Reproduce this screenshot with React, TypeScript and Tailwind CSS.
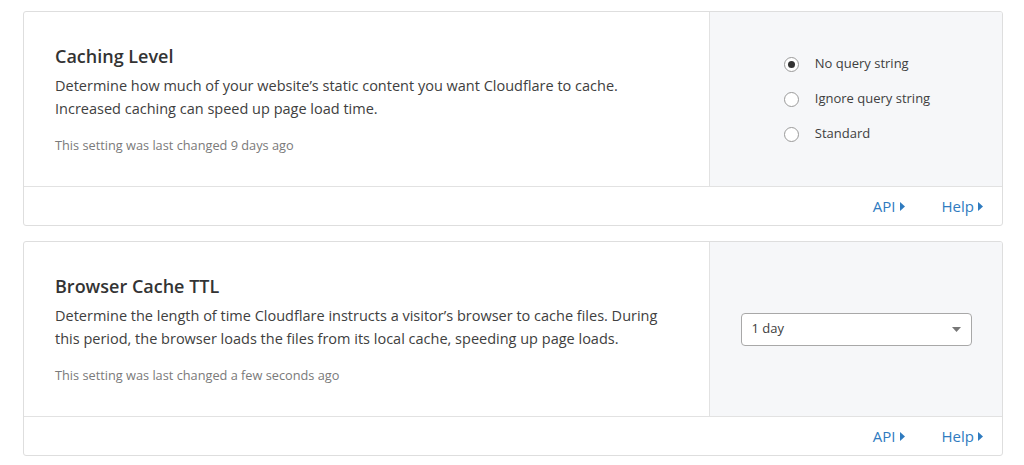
import React from 'react';

const font = { fontFamily: '"Open Sans", "Noto Sans", Arial, sans-serif' };

const Caret = () => (
  <svg width="5" height="9" viewBox="0 0 5 9" className="ml-[4px] inline-block">
    <path d="M0 0 L5 4.5 L0 9 Z" fill="currentColor" />
  </svg>
);

const CardFooter = () => (
  <div className="flex h-[39px] items-center justify-end gap-[37px] border-t border-[#e2e2e2] pr-[19px] text-[15px] text-[#2f7bbf]">
    <a className="flex items-center">
      API
      <Caret />
    </a>
    <a className="flex items-center">
      Help
      <Caret />
    </a>
  </div>
);

type SettingCardProps = {
  title: string;
  lines: string[];
  changed: string;
  children: React.ReactNode;
};

const SettingCard = ({ title, lines, changed, children }: SettingCardProps) => (
  <div className="overflow-hidden rounded-[3px] border border-[#dedede] bg-white">
    <div className="flex h-[174px]">
      <div className="flex-1 pl-[31px] pt-[31px]">
        <h3 className="text-[18px] leading-[26px] font-semibold text-[#333]">{title}</h3>
        <p className="mt-[5px] text-[14.5px] leading-[23px] text-[#404040]">
          {lines.map((l) => (
            <span key={l} className="block">
              {l}
            </span>
          ))}
        </p>
        <p className="mt-[17px] text-[12.75px] leading-[16px] text-[#7a7a7a]">{changed}</p>
      </div>
      <div className="flex w-[293px] items-center justify-center border-l border-[#e2e2e2] bg-[#f6f7f9]">
        {children}
      </div>
    </div>
    <CardFooter />
  </div>
);

const Radio = ({ label, checked }: { label: string; checked?: boolean }) => (
  <label className="flex h-[35px] items-center gap-[16px] text-[13px] text-[#404040]">
    <span className="flex h-[15px] w-[15px] items-center justify-center rounded-full border border-[#9a9a9a] bg-white">
      {checked && <span className="h-[7px] w-[7px] rounded-full bg-[#333]" />}
    </span>
    {label}
  </label>
);

export default function App() {
  return (
    <div className="min-h-screen bg-white px-[23px] pt-[11px]" style={font}>
      <div className="flex w-[980px] flex-col gap-[15px]">
        <SettingCard
          title="Caching Level"
          lines={[
            'Determine how much of your website’s static content you want Cloudflare to cache.',
            'Increased caching can speed up page load time.',
          ]}
          changed="This setting was last changed 9 days ago"
        >
          <div className="flex flex-col pl-[2px]">
            <Radio label="No query string" checked />
            <Radio label="Ignore query string" />
            <Radio label="Standard" />
          </div>
        </SettingCard>

        <SettingCard
          title="Browser Cache TTL"
          lines={[
            'Determine the length of time Cloudflare instructs a visitor’s browser to cache files. During',
            'this period, the browser loads the files from its local cache, speeding up page loads.',
          ]}
          changed="This setting was last changed a few seconds ago"
        >
          <div className="flex h-[33px] w-[231px] items-center justify-between rounded-[4px] border border-[#a8a8a8] bg-white pl-[10px] pr-[10px] text-[13px] text-[#404040]">
            <span>1 day</span>
            <svg width="9" height="5" viewBox="0 0 9 5">
              <path d="M0 0 L9 0 L4.5 5 Z" fill="#777" />
            </svg>
          </div>
        </SettingCard>
      </div>
    </div>
  );
}
